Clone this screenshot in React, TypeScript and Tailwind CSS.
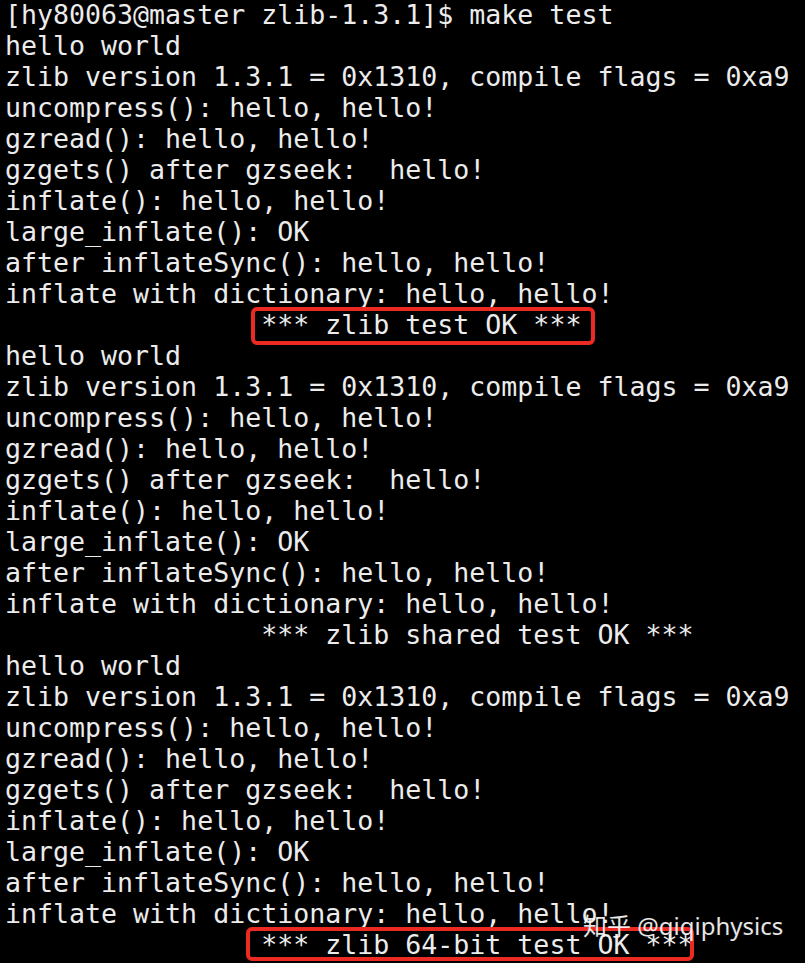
const block = [
  "hello world",
  "zlib version 1.3.1 = 0x1310, compile flags = 0xa9",
  "uncompress(): hello, hello!",
  "gzread(): hello, hello!",
  "gzgets() after gzseek:  hello!",
  "inflate(): hello, hello!",
  "large_inflate(): OK",
  "after inflateSync(): hello, hello!",
  "inflate with dictionary: hello, hello!",
];

const indent = "                ";

function Line({ children }: { children: React.ReactNode }) {
  return <div className="h-[31px] whitespace-pre">{children}</div>;
}

function Boxed({ text, box }: { text: string; box: string }) {
  return (
    <Line>
      {indent}
      <span className="relative">
        {text}
        <span className={`absolute rounded-[6px] border-[4px] border-[#ec2a24] ${box}`} />
      </span>
    </Line>
  );
}

export default function App() {
  return (
    <div className="relative w-[805px] h-[963px] overflow-hidden bg-black">
      <div className="pl-[5px] -mt-[1px] font-['DejaVu_Sans_Mono',monospace] text-[26.6px] leading-[31px] text-[#ececec]">
        <Line>[hy80063@master zlib-1.3.1]$ make test</Line>
        {block.map((l, i) => (
          <Line key={"a" + i}>{l}</Line>
        ))}
        <Boxed text="*** zlib test OK ***" box="-left-[10px] -right-[14px] -top-[2px] -bottom-[5px]" />
        {block.map((l, i) => (
          <Line key={"b" + i}>{l}</Line>
        ))}
        <Line>{indent}*** zlib shared test OK ***</Line>
        {block.map((l, i) => (
          <Line key={"c" + i}>{l}</Line>
        ))}
        <Boxed text="*** zlib 64-bit test OK ***" box="-left-[15px] -right-[1px] -top-[2px] -bottom-[1px]" />
      </div>

      {/* watermark */}
      <div className="absolute left-[583px] top-[910px] font-['Noto_Sans','Noto_Sans_CJK_SC',sans-serif] text-[24px] leading-[32px] text-white/90 whitespace-pre">
        知乎 @qiqiphysics
      </div>
    </div>
  );
}
